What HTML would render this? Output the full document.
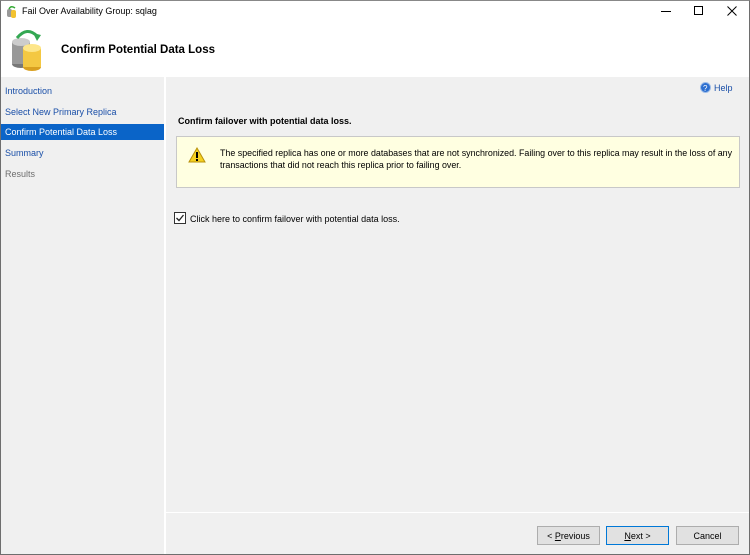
<!DOCTYPE html>
<html><head><style>
*{margin:0;padding:0;box-sizing:border-box}
body{width:750px;height:555px;overflow:hidden;background:#fff;font-family:"Segoe UI","Liberation Sans",sans-serif;font-size:9px;color:#000;position:relative}
.t{position:absolute;white-space:nowrap;margin-top:1px}
.side{position:absolute;left:0;top:77px;width:164px;height:478px;background:#f0f0f0}
.div{position:absolute;left:164px;top:77px;width:2px;height:478px;background:#fff}
.main{position:absolute;left:166px;top:77px;width:584px;height:478px;background:#f0f0f0}
.nav{position:absolute;left:5px;color:#1a4fa8;font-size:9px}
.btn{position:absolute;top:526px;height:19px;border:1px solid #adadad;background:#e1e1e1;font-size:9px;text-align:center;line-height:18px}
.frame{position:absolute;left:0;top:0;width:750px;height:555px;border:1px solid #6e6e6e;border-top-color:#888}
</style></head><body>
<svg style="position:absolute;left:6px;top:5px" width="12" height="13" viewBox="0 0 12 13"><rect x="1" y="4" width="5" height="8" rx="2" fill="#999"/><rect x="5" y="5" width="5" height="8" rx="2" fill="#f2c230"/><path d="M3 4 Q5 0 9 3" stroke="#3a3" stroke-width="1.5" fill="none"/></svg>
<div class="t" style="left:22px;top:5px;font-size:9px">Fail Over Availability Group: sqlag</div>
<div style="position:absolute;left:661px;top:11px;width:10px;height:1px;background:#000"></div>
<div style="position:absolute;left:694px;top:6px;width:9px;height:9px;border:1px solid #000"></div>
<svg style="position:absolute;left:727px;top:6px" width="10" height="10"><path d="M0.5 0.5 L9.5 9.5 M9.5 0.5 L0.5 9.5" stroke="#000" stroke-width="1"/></svg>
<svg style="position:absolute;left:9px;top:28px" width="40" height="44" viewBox="0 0 40 44"><ellipse cx="12" cy="36" rx="9" ry="4" fill="#777"/><rect x="3" y="14" width="18" height="22" fill="#999"/><ellipse cx="12" cy="14" rx="9" ry="4" fill="#ccc"/><ellipse cx="23" cy="39" rx="9" ry="4" fill="#d9a020"/><rect x="14" y="20" width="18" height="19" fill="#f4c842"/><ellipse cx="23" cy="20" rx="9" ry="4" fill="#fde68a"/><path d="M8 10 Q18 -2 28 8" stroke="#34a853" stroke-width="3" fill="none"/><path d="M24 5 L32 7 L28 13 Z" fill="#34a853"/></svg>
<div class="t" style="left:61px;top:43px;font-size:11.5px;font-weight:bold">Confirm Potential Data Loss</div>
<div class="side"></div><div class="div"></div><div class="main"></div>
<div class="nav t" style="top:85px">Introduction</div>
<div class="nav t" style="top:106px">Select New Primary Replica</div>
<div style="position:absolute;left:1px;top:124px;width:163px;height:16px;background:#0a64c8"></div>
<div class="t" style="left:5px;top:126px;color:#fff">Confirm Potential Data Loss</div>
<div class="nav t" style="top:147px">Summary</div>
<div class="t" style="left:5px;top:168px;color:#6d6d6d">Results</div>
<svg style="position:absolute;left:700px;top:82px" width="11" height="11"><circle cx="5.5" cy="5.5" r="5" fill="#2d6fd0" stroke="#9bbbe8"/><text x="3" y="9" font-size="8" fill="#fff" font-family="Liberation Sans">?</text></svg>
<div class="t" style="left:714px;top:82px;color:#1a4fa8">Help</div>
<div class="t" style="left:178px;top:115px;font-weight:bold">Confirm failover with potential data loss.</div>
<div style="position:absolute;left:176px;top:136px;width:564px;height:52px;background:#ffffe1;border:1px solid #c8c8c8"></div>
<svg style="position:absolute;left:188px;top:147px" width="18" height="16" viewBox="0 0 18 16"><path d="M9 1 L17 15 L1 15 Z" fill="#f5d020" stroke="#b8900a"/><rect x="8" y="5" width="2" height="6" fill="#000"/><rect x="8" y="12" width="2" height="2" fill="#000"/></svg>
<div class="t" style="left:220px;top:146px;line-height:12px;font-size:8.9px">The specified replica has one or more databases that are not synchronized. Failing over to this replica may result in the loss of any<br>transactions that did not reach this replica prior to failing over.</div>
<svg style="position:absolute;left:174px;top:212px" width="12" height="12"><rect x="0.5" y="0.5" width="11" height="11" fill="#fff" stroke="#333"/><path d="M2.5 6 L5 8.5 L9.5 3" stroke="#222" stroke-width="1.3" fill="none"/></svg>
<div class="t" style="left:190px;top:213px">Click here to confirm failover with potential data loss.</div>
<div style="position:absolute;left:166px;top:512px;width:584px;height:1px;background:#fff"></div>
<div class="btn" style="left:537px;width:63px">&lt; <u>P</u>revious</div>
<div class="btn" style="left:606px;width:63px;border:1px solid #0078d7"><u>N</u>ext &gt;</div>
<div class="btn" style="left:676px;width:63px">Cancel</div>
<div class="frame"></div>
</body></html>
